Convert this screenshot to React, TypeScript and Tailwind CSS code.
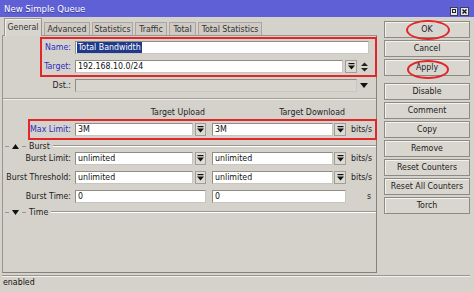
import { FC, ReactNode } from "react";

//Small icons =================
const DropIcon: FC = () => (
  <svg width="7" height="7" viewBox="0 0 7 7">
    <rect x="0.5" y="0" width="6" height="1.2" fill="#111" />
    <polygon points="0,2.4 7,2.4 3.5,6.6" fill="#111" />
  </svg>
);

const UpDownIcon: FC = () => (
  <svg width="7" height="10" viewBox="0 0 7 10">
    <polygon points="3.5,0.5 7,4 0,4" fill="#222" />
    <polygon points="0,6 7,6 3.5,9.5" fill="#222" />
  </svg>
);

const DownIcon: FC = () => (
  <svg width="8" height="5" viewBox="0 0 8 5">
    <polygon points="0,0 8,0 4,5" fill="#111" />
  </svg>
);

const UpSmall: FC = () => (
  <svg width="7" height="5" viewBox="0 0 7 5">
    <polygon points="3.5,0 7,5 0,5" fill="#111" />
  </svg>
);

const DownSmall: FC = () => (
  <svg width="7" height="5" viewBox="0 0 7 5">
    <polygon points="0,0 7,0 3.5,5" fill="#111" />
  </svg>
);

//Pieces ======================
const Field: FC<{ className: string; children?: ReactNode; disabled?: boolean }> = ({
  className,
  children,
  disabled,
}) => (
  <div
    className={`${className} h-[13px] border border-[#8f8c86] border-b-[#c9c6c0] border-r-[#c9c6c0] ${
      disabled ? "bg-[#d8d5cf]" : "bg-white"
    } flex items-center px-[2px] text-[#111] leading-none whitespace-nowrap overflow-hidden`}
  >
    {children}
  </div>
);

const Drop: FC<{ className: string }> = ({ className }) => (
  <div
    className={`${className} h-[13px] border border-[#a19e98] bg-[#dedbd5] flex items-center justify-center`}
  >
    <DropIcon />
  </div>
);

const Label: FC<{ children: ReactNode; blue?: boolean }> = ({ children, blue }) => (
  <div
    className={`w-[69px] pr-[1px] text-right whitespace-nowrap leading-none ${
      blue ? "text-[#2c2cc4]" : "text-[#222]"
    }`}
  >
    {children}
  </div>
);

const Row: FC<{ children: ReactNode; className?: string }> = ({ children, className }) => (
  <div className={`flex items-center h-[13px] ${className ?? ""}`}>{children}</div>
);

const Legend: FC<{ title: string; open?: boolean; className?: string }> = ({
  title,
  open,
  className,
}) => (
  <div className={`flex items-center h-[10px] ${className ?? ""}`}>
    <div className="w-[4px] h-px bg-[#9a968f] ml-[2px]" />
    <div className="mx-[3px] flex items-center">{open ? <UpSmall /> : <DownSmall />}</div>
    <div className="w-[4px] h-px bg-[#9a968f]" />
    <span className="px-[3px] leading-none text-[#222]">{title}</span>
    <div className="flex-1 h-[2px] border-t border-[#9a968f] border-b border-b-white" />
  </div>
);

const Btn: FC<{ label: string; children?: ReactNode; className?: string }> = ({
  label,
  children,
  className,
}) => (
  <div
    className={`relative h-[17px] border border-[#8d8a84] bg-[#d9d6d0] shadow-[inset_1px_1px_0_#f4f2ee] flex items-center justify-center text-[#1a1a1a] leading-none ${
      className ?? ""
    }`}
  >
    {label}
    {children}
  </div>
);

const tabs = [
  { name: "Advanced", w: "w-[46px]" },
  { name: "Statistics", w: "w-[41px]" },
  { name: "Traffic", w: "w-[32px]" },
  { name: "Total", w: "w-[27px]" },
  { name: "Total Statistics", w: "w-[64px]" },
];

const buttons = ["Disable", "Comment", "Copy", "Remove", "Reset Counters", "Reset All Counters", "Torch"];

//Component ===================
const App: FC = () => {
  return (
    <div className="w-[474px] h-[292px] overflow-hidden bg-[#d5d2cb] flex flex-col font-['DejaVu_Sans_Condensed','DejaVu_Sans',sans-serif] text-[8.75px] text-[#222]">
      {/**Title bar */}
      <div className="h-[17px] bg-[#6060d6] flex items-center justify-between pl-[4px] pr-[5px]">
        <span className="text-white text-[9.5px] leading-none pt-px [text-shadow:0_1px_0_#3a3a9a]">
          New Simple Queue
        </span>
        <div className="flex items-center gap-[2px] pt-[5px]">
          <div className="w-[8px] h-[9px] bg-[#e6e6ea] border border-[#3c3c60] flex items-center justify-center">
            <div className="w-[4px] h-[4px] border border-[#222]" />
          </div>
          <div className="w-[9px] h-[9px] bg-[#e6e6ea] border border-[#3c3c60] flex items-center justify-center">
            <svg width="5" height="5" viewBox="0 0 5 5">
              <path d="M0.5 0.5 L4.5 4.5 M4.5 0.5 L0.5 4.5" stroke="#111" strokeWidth="1.3" />
            </svg>
          </div>
        </div>
      </div>

      <div className="flex flex-1 min-h-0">
        {/**Left column: tabs + panel */}
        <div className="w-[375px] ml-[2px] flex flex-col">
          <div className="h-[18px] flex items-end gap-[2px] pl-[2px]">
            <div className="relative z-10 w-[38px] h-[18px] -mb-px bg-[#d8d5cf] border border-b-0 border-[#9a968f] shadow-[inset_1px_1px_0_#f2f0ec] flex items-center justify-center leading-none text-[#333]">
              General
            </div>
            {tabs.map((t) => (
              <div
                key={t.name}
                className={`${t.w} h-[13px] bg-[#cfcbc4] border border-b-0 border-[#aaa69f] flex items-center justify-center leading-none text-[#333] whitespace-nowrap`}
              >
                {t.name}
              </div>
            ))}
          </div>

          <div className="flex-1 border border-[#9a968f] border-r-[#858179] border-b-[#858179] pt-[5px] flex flex-col">
            {/**Name / Target */}
            <div className="relative flex flex-col gap-[6px]">
              <div className="absolute -top-[4px] -bottom-[4px] left-[37px] -right-[1px] border-2 border-[#e3262a] pointer-events-none" />
              <Row>
                <Label blue>Name:</Label>
                <Field className="ml-[3px] w-[294px]">
                  <span className="bg-[#1f3a8a] text-white px-px -ml-px py-px">Total Bandwidth</span>
                </Field>
              </Row>
              <Row>
                <Label blue>Target:</Label>
                <Field className="ml-[3px] w-[268px]">192.168.10.0/24</Field>
                <Drop className="ml-[2px] w-[12px]" />
                <div className="ml-[4px] flex items-center">
                  <UpDownIcon />
                </div>
              </Row>
            </div>
            <Row className="mt-[6px]">
              <Label>Dst.:</Label>
              <Field className="ml-[3px] w-[282px]" disabled />
              <div className="ml-[3px] flex items-center">
                <DownIcon />
              </div>
            </Row>

            <div className="mt-[6px] h-[2px] border-t border-[#a29e97] border-b border-b-[#f0eee9]" />

            {/**Column headers */}
            <div className="mt-[6px] h-[12px] flex items-center">
              <div className="ml-[72px] w-[130px] text-right leading-none">Target Upload</div>
              <div className="ml-[7px] w-[133px] text-right leading-none">Target Download</div>
            </div>

            {/**Max limit */}
            <div className="relative mt-[5px]">
              <div className="absolute -top-[4px] -bottom-[4px] left-[25px] -right-[1px] border-2 border-[#e3262a] pointer-events-none" />
              <Row>
                <Label blue>Max Limit:</Label>
                <Field className="ml-[3px] w-[118px]">3M</Field>
                <Drop className="ml-[2px] w-[11px]" />
                <Field className="ml-[6px] w-[121px]">3M</Field>
                <Drop className="ml-[1px] w-[12px]" />
                <div className="ml-[5px] w-[20px] text-right leading-none">bits/s</div>
              </Row>
            </div>

            <Legend title="Burst" open className="mt-[5px]" />

            <div className="mt-[1px] flex flex-col gap-[6px]">
              <Row>
                <Label>Burst Limit:</Label>
                <Field className="ml-[3px] w-[118px]">unlimited</Field>
                <Drop className="ml-[2px] w-[11px]" />
                <Field className="ml-[6px] w-[121px]">unlimited</Field>
                <Drop className="ml-[1px] w-[12px]" />
                <div className="ml-[5px] w-[20px] text-right leading-none">bits/s</div>
              </Row>
              <Row>
                <Label>Burst Threshold:</Label>
                <Field className="ml-[3px] w-[118px]">unlimited</Field>
                <Drop className="ml-[2px] w-[11px]" />
                <Field className="ml-[6px] w-[121px]">unlimited</Field>
                <Drop className="ml-[1px] w-[12px]" />
                <div className="ml-[5px] w-[20px] text-right leading-none">bits/s</div>
              </Row>
              <Row>
                <Label>Burst Time:</Label>
                <Field className="ml-[3px] w-[131px]">0</Field>
                <Field className="ml-[6px] w-[134px]">0</Field>
                <div className="ml-[5px] w-[20px] text-right leading-none">s</div>
              </Row>
            </div>

            <Legend title="Time" className="mt-[4px]" />
          </div>
        </div>

        {/**Right buttons */}
        <div className="ml-[7px] w-[86px] pt-[4px] flex flex-col">
          <div className="flex flex-col gap-[2px]">
            <Btn label="OK">
              <div className="absolute -top-[2px] left-[21px] w-[44px] h-[20px] border-2 border-[#e3262a] rounded-[50%]" />
            </Btn>
            <Btn label="Cancel" />
            <Btn label="Apply">
              <div className="absolute top-0 left-[22px] w-[42px] h-[19px] border-2 border-[#e3262a] rounded-[50%]" />
            </Btn>
          </div>
          <div className="mt-[7px] flex flex-col gap-[2px]">
            {buttons.map((b) => (
              <Btn key={b} label={b} />
            ))}
          </div>
        </div>
      </div>

      {/**Status bar */}
      <div className="mt-[2px] mb-[3px] ml-[2px] w-[468px] h-[14px] border-t border-[#9a968f] shadow-[inset_0_1px_0_#f2f0ec] flex items-center pl-px leading-none text-[#111]">
        enabled
      </div>
    </div>
  );
};

export default App;
